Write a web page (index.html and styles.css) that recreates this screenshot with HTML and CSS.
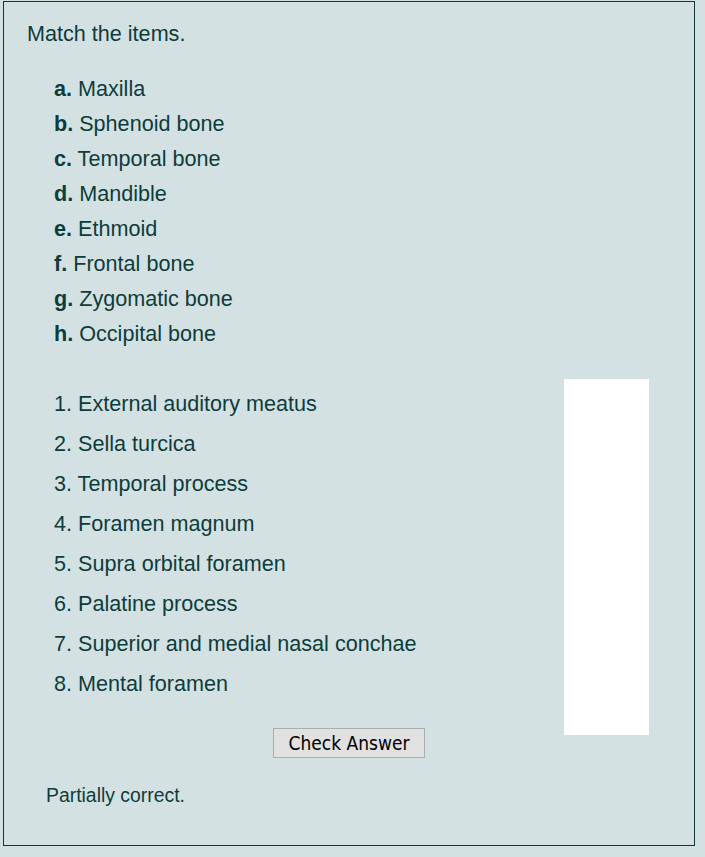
FILE: index.html
```html
<!DOCTYPE html>
<html>
<head>
<meta charset="utf-8">
<link rel="stylesheet" href="styles.css">
</head>
<body>
<div class="quiz">
  <p class="title">Match the items.</p>
  <ul class="letters">
    <li><b>a.</b> Maxilla</li>
    <li><b>b.</b> Sphenoid bone</li>
    <li><b>c.</b> Temporal bone</li>
    <li><b>d.</b> Mandible</li>
    <li><b>e.</b> Ethmoid</li>
    <li><b>f.</b> Frontal bone</li>
    <li><b>g.</b> Zygomatic bone</li>
    <li><b>h.</b> Occipital bone</li>
  </ul>
  <div class="match">
    <ol class="numbers">
      <li>1. External auditory meatus</li>
      <li>2. Sella turcica</li>
      <li>3. Temporal process</li>
      <li>4. Foramen magnum</li>
      <li>5. Supra orbital foramen</li>
      <li>6. Palatine process</li>
      <li>7. Superior and medial nasal conchae</li>
      <li>8. Mental foramen</li>
    </ol>
    <div class="answers"></div>
    <button class="check" type="button">Check Answer</button>
  </div>
  <p class="feedback">Partially correct.</p>
</div>
</body>
</html>
```
FILE: styles.css
```css
html, body {
  margin: 0;
  padding: 0;
  background: #d4e1e2;
}
body {
  font-family: "Liberation Sans", Arial, sans-serif;
  color: #0d3c3c;
  padding: 1px 0 0 3px;
}
.quiz {
  width: 690px;
  border: 1px solid #0c3a3a;
  padding: 20px 0 39px 0;
  box-sizing: content-box;
}
.title {
  margin: 0 0 0 23px;
  font-size: 21.6px;
  line-height: 24px;
}
.letters {
  list-style: none;
  margin: 25px 0 0 50px;
  padding: 0;
  font-size: 21.6px;
  line-height: 35px;
}
.letters b {
  font-weight: bold;
}
.match {
  display: grid;
  grid-template-columns: 1fr auto;
  margin-top: 28px;
}
.numbers {
  grid-column: 1;
  grid-row: 1;
  list-style: none;
  margin: 0 0 0 50px;
  padding: 5px 0 0 0;
  font-size: 21.6px;
  line-height: 40px;
}
.answers {
  grid-column: 2;
  grid-row: 1 / 3;
  width: 85px;
  height: 356px;
  background: #ffffff;
  margin-right: 45px;
}
.check {
  grid-column: 1 / 3;
  grid-row: 2;
  justify-self: center;
  align-self: start;
  margin-top: 24px;
  height: 30px;
  width: 152px;
  box-sizing: border-box;
  padding: 0;
  background: #e1e1e1;
  border: 1px solid #adadad;
  border-radius: 0;
  color: #000000;
  font-family: "DejaVu Sans", sans-serif;
  font-stretch: condensed;
  font-size: 19px;
  line-height: 26px;
}
.feedback {
  margin: 26px 0 0 42px;
  font-size: 19.4px;
  line-height: 22px;
}
```
